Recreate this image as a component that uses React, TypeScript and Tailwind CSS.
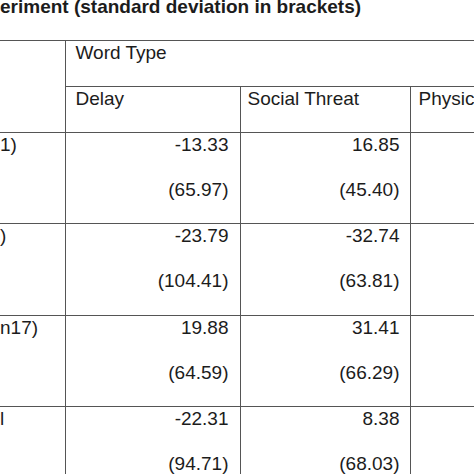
const rows = [
  { label: "1)", delay: "-13.33", delaySd: "(65.97)", social: "16.85", socialSd: "(45.40)", h: "h-[91px]" },
  { label: ")", delay: "-23.79", delaySd: "(104.41)", social: "-32.74", socialSd: "(63.81)", h: "h-[92px]" },
  { label: "n17)", delay: "19.88", delaySd: "(64.59)", social: "31.41", socialSd: "(66.29)", h: "h-[91px]" },
  { label: "l", delay: "-22.31", delaySd: "(94.71)", social: "8.38", socialSd: "(68.03)", h: "h-[91px]" },
];

export default function App() {
  return (
    <div className="w-[474px] h-[474px] overflow-hidden bg-white text-[#1c1c1c] font-['Liberation_Sans',Arial,sans-serif]">
      {/* table caption, cut at the left edge like the scan */}
      <div className="h-[40px] flex items-start">
        <p className="-mt-[4px] text-[19px] leading-[22px] font-bold whitespace-nowrap">
          eriment (standard deviation in brackets)
        </p>
      </div>

      <table className="table-fixed border-collapse w-[620px] text-[19px] leading-[22px] whitespace-nowrap">
        <colgroup>
          <col className="w-[65px]" />
          <col className="w-[175px]" />
          <col className="w-[170px]" />
          <col className="w-[210px]" />
        </colgroup>
        <tbody>
          <tr className="h-[46px]">
            <td rowSpan={2} className="border-t border-[#555]" />
            <td colSpan={3} className="border-t border-l border-b border-[#555] align-top pl-[10px] pt-[1px]">
              Word Type
            </td>
          </tr>
          <tr className="h-[46px]">
            <td className="border-l border-[#555] align-top pl-[10px] pt-[1px]">Delay</td>
            <td className="border-l border-[#555] align-top pl-[7px] pt-[1px]">Social Threat</td>
            <td className="border-l border-[#555] align-top pl-[8px] pt-[1px]">Physical Threat</td>
          </tr>
          {rows.map((r) => (
            <tr key={r.delaySd} className={r.h}>
              <td className="border-t border-[#555] align-top pt-[1px] overflow-hidden">{r.label}</td>
              <td className="border-t border-l border-[#555] align-top text-right pr-[11px] pt-[1px]">
                <div>{r.delay}</div>
                <div className="mt-[23px]">{r.delaySd}</div>
              </td>
              <td className="border-t border-l border-[#555] align-top text-right pr-[10px] pt-[1px]">
                <div>{r.social}</div>
                <div className="mt-[23px]">{r.socialSd}</div>
              </td>
              <td className="border-t border-l border-[#555] align-top" />
            </tr>
          ))}
        </tbody>
      </table>
    </div>
  );
}
